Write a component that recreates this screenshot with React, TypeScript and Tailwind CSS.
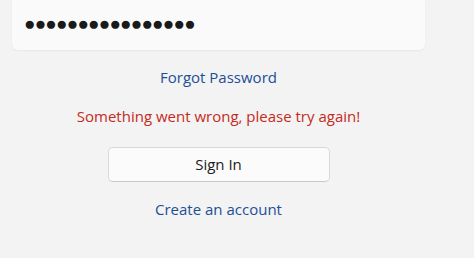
export default function App() {
  return (
    <div
      className="w-[474px] h-[258px] bg-[#f3f3f3] flex flex-col overflow-hidden"
      style={{ fontFamily: '"Open Sans", "Noto Sans", sans-serif' }}
    >
      <div className="ml-[12px] w-[413px] h-[50px] bg-[#fafafa] rounded-b-md shadow-[0_1px_2px_rgba(0,0,0,0.05)] flex items-center pl-[12px] pb-[3px]">
        <span className="text-[#1a1a1a] text-[19px] tracking-[-0.8px] leading-none">●●●●●●●●●●●●●●●●</span>
      </div>
      <div className="w-[437px] flex flex-col items-center">
        <a className="mt-[16px] text-[15px] leading-[22px] text-[#1c4f96]">Forgot Password</a>
        <p className="mt-[17px] text-[15px] leading-[22px] text-[#c42b1c]">Something went wrong, please try again!</p>
        <button className="mt-[20px] w-[222px] h-[35px] bg-[#fbfbfb] border border-[#d9d9d9] border-b-[#c8c8c8] rounded-[5px] text-[15px] text-[#1a1a1a]">
          Sign In
        </button>
        <a className="mt-[16px] text-[15px] leading-[22px] text-[#1c4f96]">Create an account</a>
      </div>
    </div>
  );
}
